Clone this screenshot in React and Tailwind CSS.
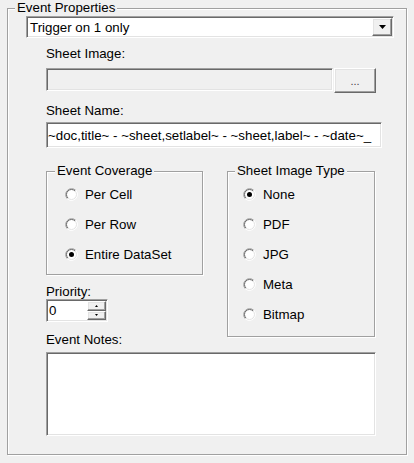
import React, { useState } from "react";

const sunken =
  "border border-t-[#a0a0a0] border-l-[#a0a0a0] border-r-white border-b-white shadow-[inset_1px_1px_0_#696969,inset_-1px_-1px_0_#e3e3e3]";
const raised =
  "border border-t-white border-l-white border-r-[#696969] border-b-[#696969] shadow-[inset_-1px_-1px_0_#a0a0a0,inset_1px_1px_0_#e3e3e3] bg-[#f0f0f0]";

function Group({ title, legendLeft, className, children }) {
  return (
    <div className={`relative border border-[#a0a0a0] shadow-[inset_1px_1px_0_#fff,1px_1px_0_#fff] ${className}`}>
      <span className={`absolute top-[-9px] ${legendLeft} bg-[#f0f0f0] px-[2px] leading-[15px]`}>{title}</span>
      {children}
    </div>
  );
}

function Radio({ label, checked, onClick }) {
  return (
    <button type="button" onClick={onClick} className="flex h-[30px] items-center gap-[7px] text-left">
      <svg width="13" height="13" viewBox="0 0 13 13" className="shrink-0">
        <circle cx="6.5" cy="6.5" r="6" fill="#fff" />
        <path d="M2.26 10.74A6 6 0 0 1 10.74 2.26" stroke="#a0a0a0" fill="none" />
        <path d="M2.26 10.74A6 6 0 0 0 10.74 2.26" stroke="#ffffff" fill="none" />
        <path d="M2.96 10.04A5 5 0 0 1 10.04 2.96" stroke="#696969" fill="none" />
        <path d="M2.96 10.04A5 5 0 0 0 10.04 2.96" stroke="#e3e3e3" fill="none" />
        {checked && <circle cx="6.5" cy="6.5" r="2.5" fill="#000" />}
      </svg>
      <span className="leading-[15px]">{label}</span>
    </button>
  );
}

export default function App() {
  const [coverage, setCoverage] = useState("Entire DataSet");
  const [imgType, setImgType] = useState("None");

  return (
    <div
      className="h-[463px] w-[414px] overflow-hidden bg-[#f0f0f0] pt-[8px] pl-[7px] text-[13.3px] text-black"
      style={{ fontFamily: '"Liberation Sans", Arial, sans-serif' }}
    >
      <Group title="Event Properties" legendLeft="left-[7px]" className="h-[447px] w-[400px]">
        {/* trigger dropdown */}
        <div className={`ml-[18px] mt-[7px] flex h-[22px] w-[368px] bg-white p-[1px] ${sunken}`}>
          <div className="flex flex-1 items-center pl-[2px] leading-[15px]">Trigger on 1 only</div>
          <div className={`flex w-[20px] items-center justify-center ${raised}`}>
            <svg width="7" height="4" viewBox="0 0 7 4">
              <path d="M0 0H7L3.5 4Z" fill="#000" />
            </svg>
          </div>
        </div>

        <div className="ml-[38px]">
          <div className="mt-[8px] leading-[15px]">Sheet Image:</div>
          <div className="mt-[7px] flex items-start">
            <input
              readOnly
              disabled
              className={`h-[23px] w-[287px] bg-[#f0f0f0] px-[2px] outline-none ${sunken}`}
            />
            <button type="button" className={`ml-[1px] flex h-[25px] w-[42px] items-end justify-center pb-[5px] text-[11px] leading-[11px] text-[#444] ${raised}`}>
              ...
            </button>
          </div>

          <div className="mt-[10px] leading-[15px]">Sheet Name:</div>
          <input
            readOnly
            value="~doc,title~ - ~sheet,setlabel~ - ~sheet,label~ - ~date~_"
            className={`mt-[4px] block h-[26px] w-[336px] bg-white pl-[1px] pr-0 outline-none ${sunken}`}
          />

          <div className="mt-[23px] flex items-start">
            <div className="w-[157px]">
              <Group title="Event Coverage" legendLeft="left-[8px]" className="h-[104px]">
                <div className="flex flex-col pl-[18px] pt-[7px]">
                  {["Per Cell", "Per Row", "Entire DataSet"].map((o) => (
                    <Radio key={o} label={o} checked={coverage === o} onClick={() => setCoverage(o)} />
                  ))}
                </div>
              </Group>

              <div className="mt-[9px] leading-[15px]">Priority:</div>
              <div className={`flex h-[23px] w-[62px] bg-white p-[1px] ${sunken}`}>
                <div className="flex flex-1 items-center pl-[1px] leading-[15px]">0</div>
                <div className="flex w-[19px] flex-col">
                  <div className={`flex flex-1 items-center justify-center ${raised}`}>
                    <svg width="3" height="2" viewBox="0 0 3 2">
                      <path d="M1.5 0L3 2H0Z" fill="#000" />
                    </svg>
                  </div>
                  <div className={`flex flex-1 items-center justify-center ${raised}`}>
                    <svg width="3" height="2" viewBox="0 0 3 2">
                      <path d="M0 0H3L1.5 2Z" fill="#000" />
                    </svg>
                  </div>
                </div>
              </div>

              <div className="mt-[10px] leading-[15px]">Event Notes:</div>
            </div>

            <Group title="Sheet Image Type" legendLeft="left-[7px]" className="ml-[24px] h-[166px] w-[148px]">
              <div className="flex flex-col pl-[15px] pt-[7px]">
                {["None", "PDF", "JPG", "Meta", "Bitmap"].map((o) => (
                  <Radio key={o} label={o} checked={imgType === o} onClick={() => setImgType(o)} />
                ))}
              </div>
            </Group>
          </div>

          <textarea
            readOnly
            className={`mt-[5px] block h-[84px] w-[330px] resize-none bg-white outline-none ${sunken}`}
          />
        </div>
      </Group>
    </div>
  );
}
